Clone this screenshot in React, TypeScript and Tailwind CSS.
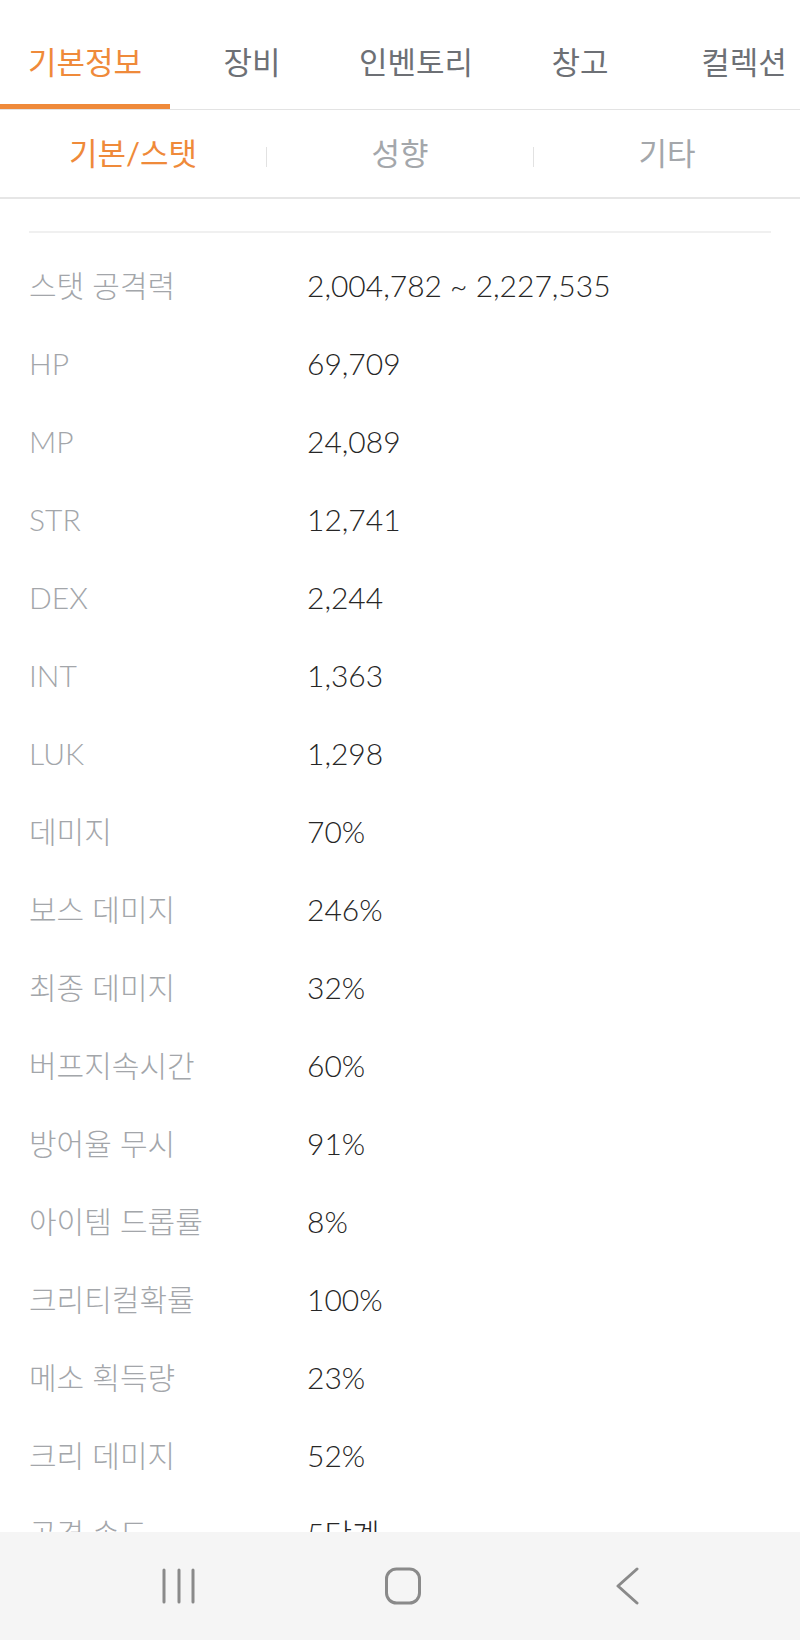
import React from "react";

const FONT = 'Lato, "Noto Sans CJK KR", sans-serif';

const mainTabs = ["기본정보", "장비", "인벤토리", "창고", "컬렉션"];
const subTabs = ["기본/스탯", "성향", "기타"];

const stats: [string, string][] = [
  ["스탯 공격력", "2,004,782 ~ 2,227,535"],
  ["HP", "69,709"],
  ["MP", "24,089"],
  ["STR", "12,741"],
  ["DEX", "2,244"],
  ["INT", "1,363"],
  ["LUK", "1,298"],
  ["데미지", "70%"],
  ["보스 데미지", "246%"],
  ["최종 데미지", "32%"],
  ["버프지속시간", "60%"],
  ["방어율 무시", "91%"],
  ["아이템 드롭률", "8%"],
  ["크리티컬확률", "100%"],
  ["메소 획득량", "23%"],
  ["크리 데미지", "52%"],
  ["공격 속도", "5단계"],
];

function NavBar() {
  return (
    <div className="h-[108px] shrink-0 bg-[#f5f5f5] flex items-center justify-center pl-[6px]">
      <div className="w-[224px] flex justify-center">
        <svg width="36" height="38" viewBox="0 0 36 38" fill="none" stroke="#8a8a8a" strokeWidth="3" strokeLinecap="round">
          <path d="M3 3v32M18 3v32M32 3v32" />
        </svg>
      </div>
      <div className="w-[224px] flex justify-center">
        <svg width="38" height="38" viewBox="0 0 38 38" fill="none" stroke="#8a8a8a" strokeWidth="3">
          <rect x="2.5" y="2" width="33" height="34" rx="10" />
        </svg>
      </div>
      <div className="w-[224px] flex justify-center">
        <svg width="26" height="38" viewBox="0 0 26 38" fill="none" stroke="#8a8a8a" strokeWidth="3" strokeLinecap="round" strokeLinejoin="round">
          <path d="M23 2L4 19l19 17" />
        </svg>
      </div>
    </div>
  );
}

export default function App() {
  return (
    <div
      className="w-[800px] h-[1640px] bg-white flex flex-col overflow-hidden"
      style={{ fontFamily: FONT }}
    >
      <div className="flex-1 overflow-hidden">
        {/* Main tabs */}
        <div className="h-[110px] flex border-b border-[#e3e3e3] whitespace-nowrap">
          {mainTabs.map((t, i) => (
            <div
              key={t}
              className={
                i === 0
                  ? "w-[170px] shrink-0 flex items-center justify-center pt-[20px] text-[31px] text-[#ef8a3a] border-b-[5px] border-[#ef8a3a]"
                  : "w-[164px] shrink-0 flex items-center justify-center pt-[20px] pb-[5px] text-[31px] text-[#6d7075]"
              }
            >
              {t}
            </div>
          ))}
        </div>

        {/* Sub tabs */}
        <div className="h-[89px] flex items-center border-b-2 border-[#e6e6e6]">
          {subTabs.map((t, i) => (
            <React.Fragment key={t}>
              {i > 0 && <div className="w-px h-[20px] bg-[#e2e2e2] mt-[6px]" />}
              <div
                className={
                  i === 0
                    ? "flex-1 text-center text-[31px] text-[#ef8a3a]"
                    : "flex-1 text-center text-[31px] text-[#a4a7ab]"
                }
              >
                {t}
              </div>
            </React.Fragment>
          ))}
        </div>

        {/* Stats */}
        <div className="px-[29px] pt-[32px]">
          <div className="h-[2px] bg-[#f0f0f0]" />
          <div className="pt-[13px]">
            {stats.map(([label, value]) => (
              <div key={label} className="h-[78px] flex items-center text-[30px] font-light">
                <div className="w-[278px] shrink-0 text-[#a3a6aa]">{label}</div>
                <div className="text-[#262626]">{value}</div>
              </div>
            ))}
          </div>
        </div>
      </div>
      <NavBar />
    </div>
  );
}
